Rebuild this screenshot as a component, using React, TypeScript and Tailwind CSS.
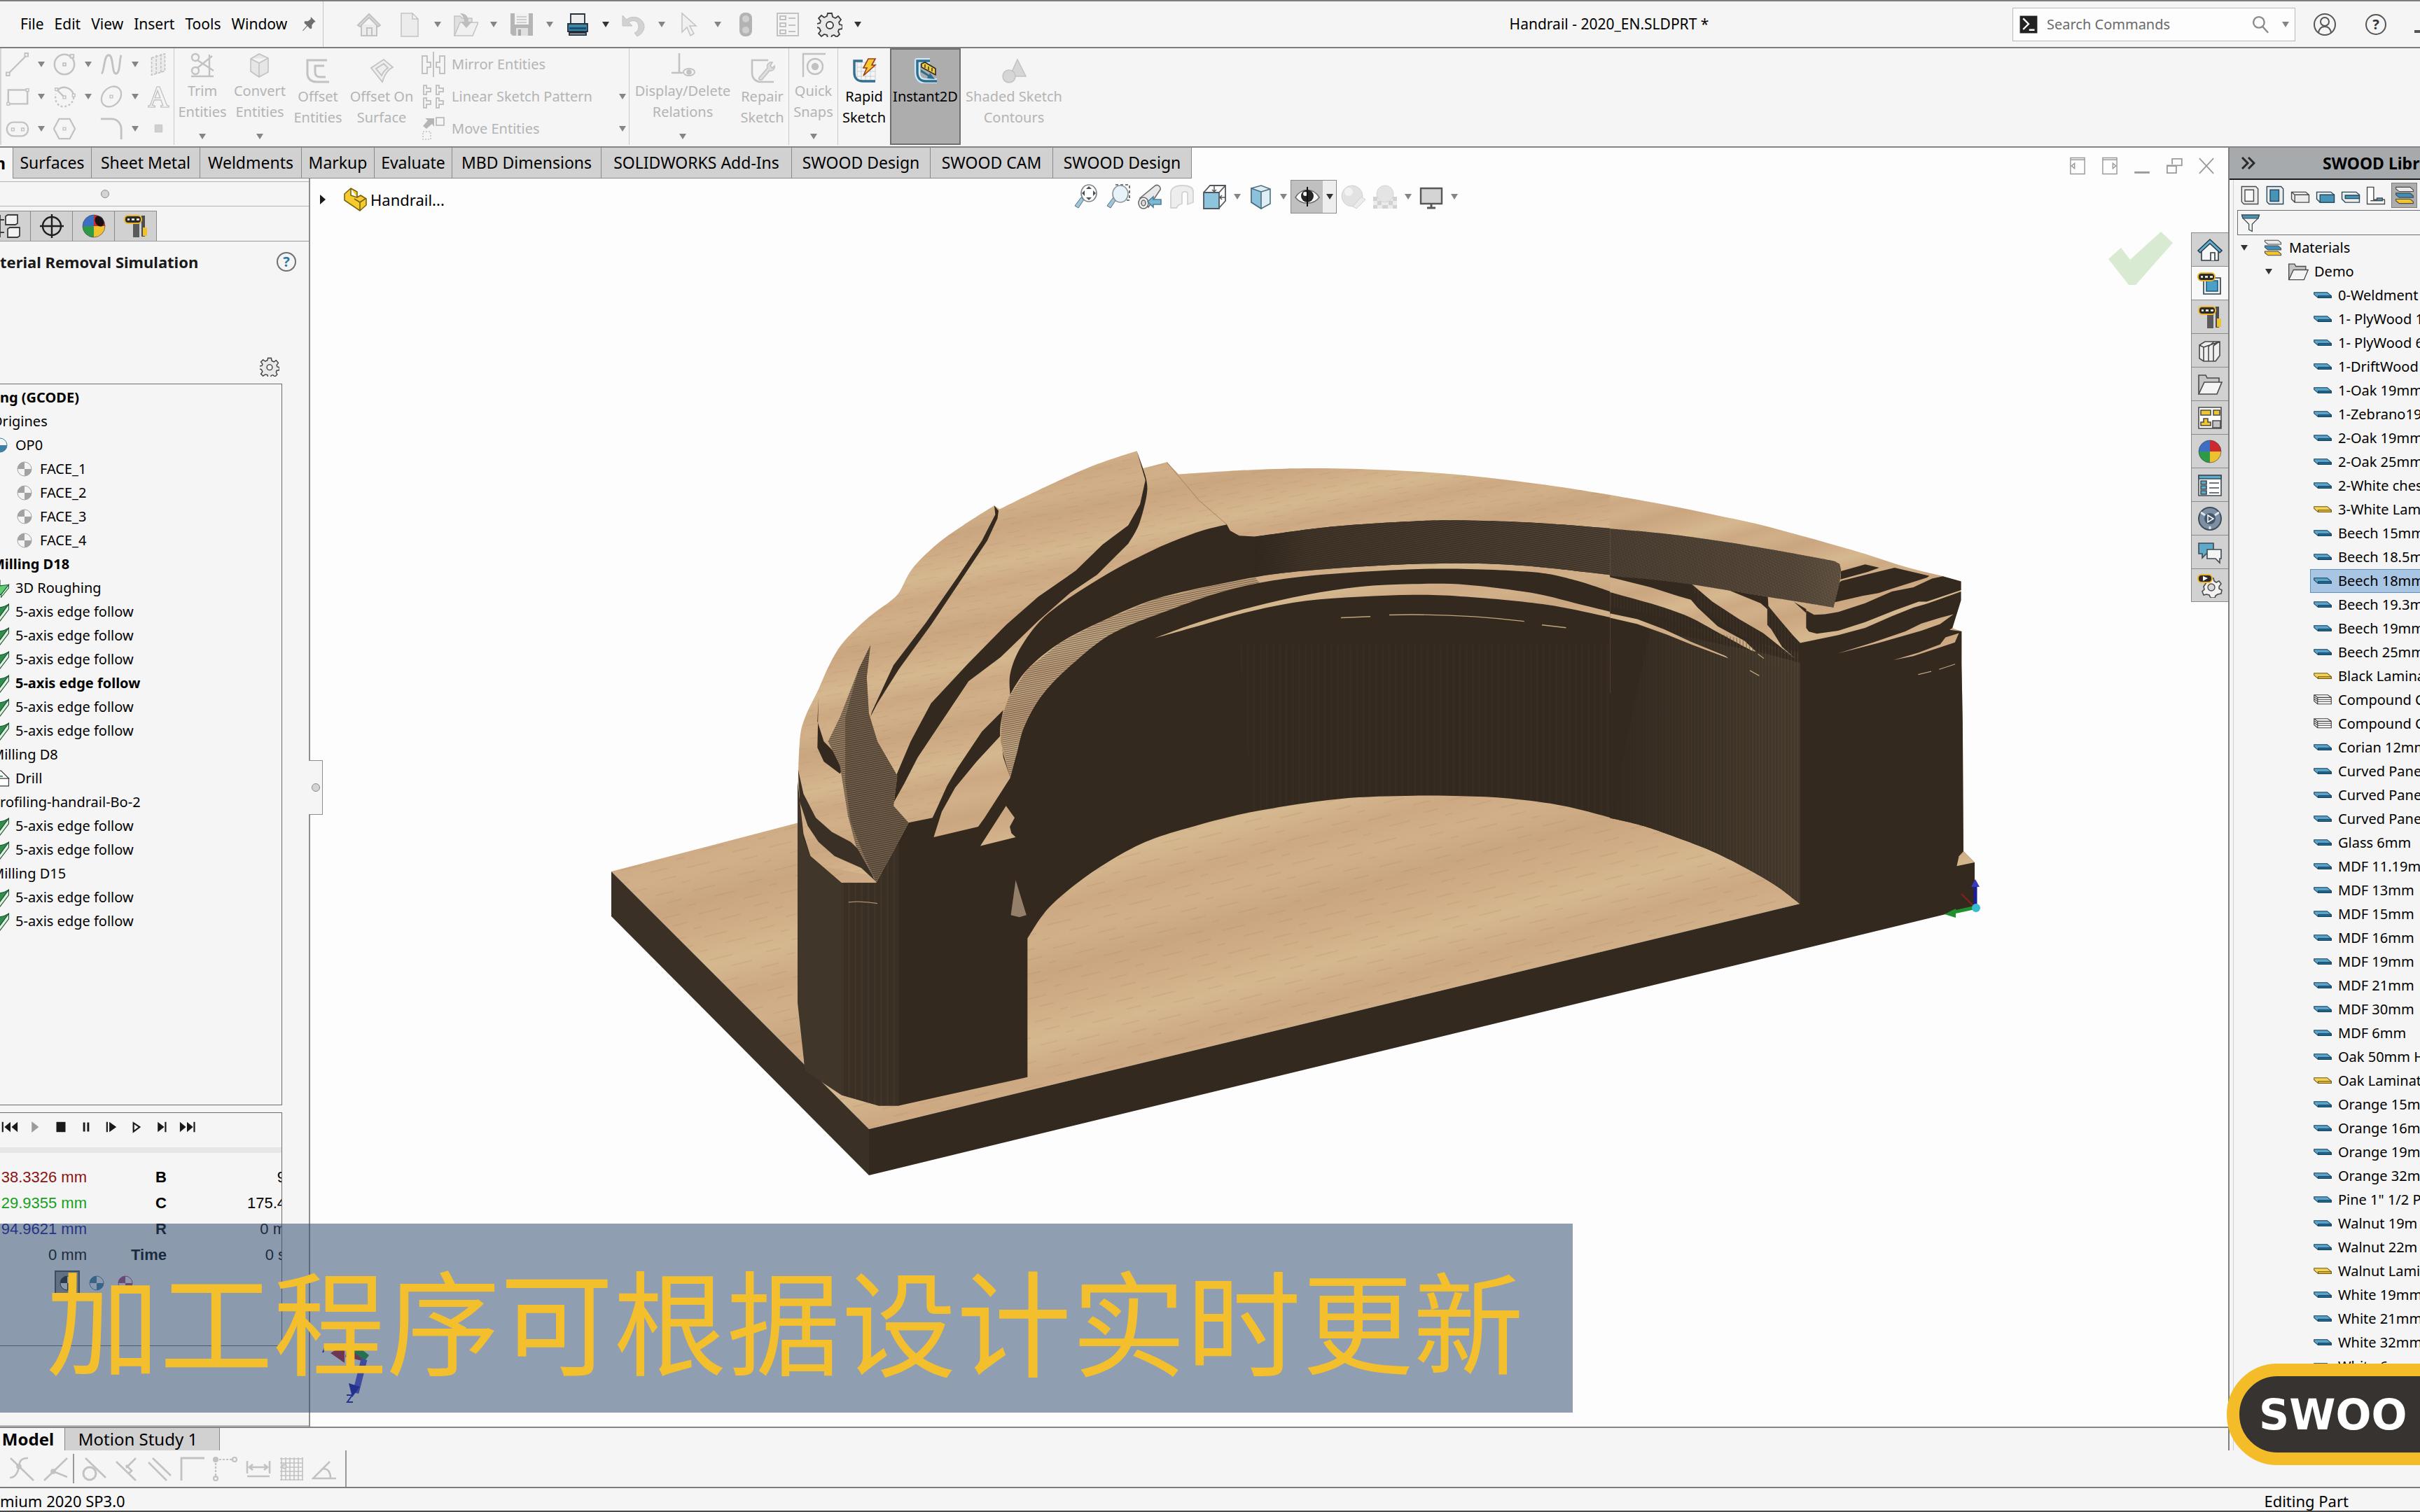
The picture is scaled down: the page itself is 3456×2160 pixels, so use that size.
import type { ReactNode } from 'react'
import { clsx } from 'clsx'

const G = '#c2c2c2'
const D = '#3c3c3c'

// All icons are drawn on a 36 x 36 grid
const art: Record<string, ReactNode> = {
  pin: <path d="M19 4l9 9-3 1-4 5 0 6-3 1-5-5-8 9-1-1 8-9-5-5 1-3h6l5-4z" fill="#6f6f6f" />,
  home: <g fill="#ececec" stroke={G} strokeWidth="2"><path d="M7 18v16h22V18" /><path d="M2 19L18 3l16 16-3 2L18 8 5 21z" fill="#dcdcdc" /><path d="M15 34V23h7v11" fill="none" /></g>,
  doc: <path d="M6 2h16l8 8v25H6zM22 2v8h8" fill="#ececec" stroke={G} strokeWidth="1.5" />,
  open: <g stroke={G} strokeWidth="1.5"><path d="M2 34V6h8l3 3h14v10" fill="#e0e0e0" /><path d="M2 34l8-19h26l-8 19z" fill="#f0f0f0" /><path d="M10 2c9 0 12 5 12 12h5l-8 9-8-9h5c0-5-2-8-6-12z" fill="#bdbdbd" stroke="none" /></g>,
  save: <g><path d="M2 2h32v32H5l-3-3z" fill="#b5b5b5" /><path d="M8 2h20v16H8z" fill="#f1f1f1" /><path d="M11 7h14M11 11h14M11 15h14" stroke={G} strokeWidth="1.5" /><path d="M10 23h17v11H10z" fill="#e0e0e0" /><path d="M13 25h4v9h-4z" fill="#a8a8a8" /></g>,
  print: <g stroke="#26303a" strokeWidth="1.8"><path d="M8 17V3h20v14" fill="#ececec" /><path d="M4 17h28v11H4z" fill="#3e86a8" /><path d="M6 22h24v3H6z" fill="#14506e" stroke="none" /><path d="M6 30h24v3H6z" fill="#cfe6f0" /></g>,
  undo: <path d="M2 5v15h14l-5-5c6-5 14-2 14 6 0 5-3 8-6 9l4 5c6-3 10-8 10-14C33 9 17 3 8 11z" fill="#d2d2d2" stroke={G} />,
  cursor: <path d="M7 2v27l7-7 5 12 5-3-6-11h9z" fill="#f0f0f0" stroke={G} strokeWidth="1.5" />,
  light: <g><rect x="9" y="1" width="18" height="34" rx="8" fill="#b3b3b3" /><circle cx="18" cy="10" r="5" fill="#cfcfcf" /><circle cx="18" cy="26" r="5" fill="#cfcfcf" /></g>,
  list: <g stroke={G} strokeWidth="2" fill="none"><path d="M3 2h30v32H3z" /><path d="M7 6h8v5H7zM7 16h8v5H7zM7 26h8v5H7zM19 9h10M19 19h10M19 28h10" /></g>,
  gear: <g fill="#e9e9e9" stroke={D} strokeWidth="1.8"><path d="M15 2h6l1 5 4 2 4-3 4 5-3 4 1 3 4 1v5l-5 1-1 3 2 4-4 4-4-3-3 1-1 3h-5l-1-4-4-1-4 3-4-4 3-4-2-4-4-1v-5l5-1 1-3-3-4 4-4 4 3 4-2z" /><circle cx="18" cy="19" r="5" fill="#f8f8f8" /></g>,
  line: <g stroke={G} strokeWidth="2" fill="#f5f5f5"><path d="M4 32L32 4" strokeWidth="2.5" /><path d="M1 30h5v5H1zM29 1h5v5h-5z" /></g>,
  circle: <g stroke={G} strokeWidth="2" fill="#f5f5f5"><circle cx="18" cy="18" r="15" strokeWidth="2.6" /><path d="M16 16h4v4h-4zM27 3h5v5h-5z" /></g>,
  spline: <path d="M3 32C8 30 6 4 14 4s4 28 11 28S30 8 33 4" stroke={G} strokeWidth="3" fill="none" />,
  plane: <path d="M8 8l20-6v26L8 34zM15 4v28M22 2v28" stroke={G} strokeWidth="1.8" strokeDasharray="4 2" fill="#ececec" />,
  rect: <g stroke={G} strokeWidth="2.6" fill="none"><path d="M4 8h29v21H4z" /><path d="M2 27h4v4H2zM31 6h4v4h-4z" strokeWidth="1.5" fill="#f5f5f5" /></g>,
  arc: <g stroke={G} strokeWidth="2.4" fill="none"><path d="M8 8c8-8 22-3 24 8" /><path d="M32 19c-1 10-10 15-18 14C6 31 3 22 5 14" strokeDasharray="3 3" /><path d="M6 7l12 12" /><path d="M4 5h4v4H4zM30 14h4v4h-4zM16 17h4v4h-4z" strokeWidth="1.5" fill="#f5f5f5" /></g>,
  ellipse: <g stroke={G} fill="none"><ellipse cx="18" cy="18" rx="17" ry="13" transform="rotate(-48 18 18)" strokeWidth="2.4" /><path d="M16 16h4v4h-4z" strokeWidth="1.5" /></g>,
  text: <path d="M3 34v-2l3-1L16 3h4l11 28 3 1v2H22v-2l3-1-3-8H12l-3 8 4 1v2zM13 20h8l-4-11z" stroke={G} strokeWidth="1.5" fill="none" />,
  slot: <g stroke={G} strokeWidth="2.4" fill="none"><rect x="2" y="8" width="32" height="21" rx="10" /><path d="M9 17h4v4H9zM24 17h4v4h-4z" strokeWidth="1.5" /></g>,
  polygon: <g stroke={G} strokeWidth="2.4" fill="none"><path d="M10 3h16l8 15-8 15H10L2 18z" /><path d="M16 16h4v4h-4z" strokeWidth="1.5" /></g>,
  fillet: <path d="M2 3h16c10 0 15 8 15 16v15" stroke={G} strokeWidth="3" fill="none" />,
  point: <path d="M13 12h11v11H13z" fill="#cfcfcf" stroke={G} />,
  trim: <g stroke={G} strokeWidth="2.4" fill="none"><circle cx="8" cy="7" r="5" /><circle cx="8" cy="26" r="5" /><path d="M11 11l23 15M11 22L32 5M28 3v31M2 34h32" /></g>,
  convert: <path d="M5 9l12-7 13 6v20l-13 7-12-8zM5 9l12 6 13-7M17 15v20" stroke={G} strokeWidth="1.6" fill="#e6e6e6" />,
  offset: <path d="M31 3H3v19c0 8 6 12 13 12h18M27 11H14v9c0 5 3 7 7 7h8" stroke={G} strokeWidth="3" fill="none" />,
  offsetOn: <path d="M3 14L21 2l13 11c-8 4-12 10-15 21zM10 15l11-7 6 6c-5 3-7 6-9 11z" stroke={G} strokeWidth="1.8" fill="#eee" />,
  mirror: <path d="M2 6h7v9h5v7H9v9H2zM34 6h-7v9h-5v7h5v9h7zM18 0v36" stroke={G} strokeWidth="2" fill="none" />,
  pattern: <path d="M4 2h4v4h6v5H8v4H4zM22 2h4v4h6v5h-6v4h-4zM4 20h4v4h6v5H8v5H4zM22 20h4v4h6v5h-6v5h-4z" stroke={G} strokeWidth="2" fill="none" />,
  move: <g><path d="M3 14l7-8-4-3h13v12l-3-4-8 7z" fill="#b5b5b5" /><path d="M22 2h11v11H22z" stroke={G} strokeWidth="2" fill="none" /><path d="M3 22h11v11H3z" stroke={G} strokeDasharray="2 2" strokeWidth="1.5" fill="none" /></g>,
  relations: <g stroke={G} strokeWidth="2.6" fill="none"><path d="M13 1v28M2 29h16" /><ellipse cx="27" cy="28" rx="8" ry="5" strokeWidth="2" /><circle cx="27" cy="28" r="2.5" fill={G} /></g>,
  repair: <g stroke={G} fill="none"><path d="M26 3H3v18c0 8 5 13 13 13h18" strokeWidth="2.6" /><path d="M13 28l12-14c-2-5 3-9 7-8l-3 5 3 3 3-3c1 5-3 8-7 7L17 31c-3 1-5-1-4-3z" strokeWidth="1.6" fill="#dedede" /></g>,
  snaps: <g stroke={G} strokeWidth="2.4" fill="none"><path d="M3 35V2h32" /><circle cx="20" cy="20" r="11" /><circle cx="20" cy="20" r="4" fill={G} /></g>,
  rapid: <g fill="none"><path d="M8 6h26v26H8zM14 6v26M20 6v26M27 6v26M8 13h26M8 19h26M8 26h26" stroke="#c9cdd1" strokeWidth="1" /><path d="M16 4H4v17c0 8 5 12 12 12h18" stroke="#36708f" strokeWidth="3.4" /><path d="M24 1h10l-5 9h5L17 25l5-11h-5z" fill="#f6c933" stroke="#9a3a16" strokeWidth="1.6" /></g>,
  instant: <g fill="none"><path d="M24 4H6v16c0 9 5 13 12 13h16" stroke="#cfe9f6" strokeWidth="8" strokeLinejoin="round" /><path d="M24 4H6v16c0 9 5 13 12 13h16" stroke="#2f6d8e" strokeWidth="3.4" /><path d="M12 8l5-2 15 9v9L12 13z" fill="#f5cd3c" stroke="#2c2c2c" strokeWidth="1.6" /><path d="M17 9v5M22 12v5M27 14v5" stroke="#2c2c2c" strokeWidth="1.4" /><path d="M11 16l12 8 1-3 7 9-11-1 1-3-10-6z" fill="#2f6d8e" /></g>,
  shaded: <g fill="#d6d6d6" stroke={G} strokeWidth="1.5"><path d="M23 2l12 24H12z" /><circle cx="11" cy="26" r="9" /></g>,
  part: <path d="M3 10l9-8 9 5v8l5-3 8 5v9l-9 8L3 19z M12 2v10l9 3M25 34V22l9-6M25 22l-8-5" fill="#f6cb2e" stroke="#7a6414" strokeWidth="1.6" strokeLinejoin="round" />,
  zoomFit: <g><path d="M3 31l9-12 4 3-8 12z" fill="#9cc7dc" stroke="#5b6b74" /><ellipse cx="23" cy="13" rx="11" ry="12" fill="#fff" stroke="#7b8288" strokeWidth="1.6" /><path d="M23 3l4 4h-8zM23 23l4-4h-8zM13 13l4-4v8zM33 13l-4-4v8z" fill="#4a4f53" /></g>,
  zoomArea: <g><path d="M3 31l9-12 4 3-8 12z" fill="#9cc7dc" stroke="#5b6b74" /><path d="M15 1h20v22H22" fill="none" stroke="#4a4f53" strokeWidth="1.6" strokeDasharray="4 3" /><ellipse cx="22" cy="14" rx="11" ry="12" fill="#e6f3fa" stroke="#8c9499" strokeWidth="1.6" /></g>,
  prevView: <g stroke="#6a6a6a" strokeWidth="1.6"><path d="M4 20L26 2c4-2 8 2 7 6L16 33z" fill="#e8e8e8" /><ellipse cx="9" cy="27" rx="7" ry="8" fill="#f4f4f4" /><ellipse cx="9" cy="27" rx="3" ry="4" fill="#ddd" /><path d="M15 25l8-7v4h11v7H23v4z" fill="#7db9d6" stroke="#4c7f98" /></g>,
  section: <path d="M2 34V13C2 5 10 2 18 2s16 2 16 9v15l-8 3V13c0-3-8-3-8 1v14l-5 2-3 4z" fill="#ededed" stroke="#d2d2d2" strokeWidth="1.8" />,
  orient: <g stroke="#50585d" strokeWidth="1.8" fill="none"><path d="M3 12l9-10h22v22l-9 10M25 12l9-10" /><path d="M3 12h22v23H3z" fill="#8fc4de" /><path d="M18 2v9M15 8l3 3 3-3M34 19h-8M29 16l-3 3 3 3" strokeWidth="1.5" /></g>,
  display: <g stroke="#4f6e7e" strokeWidth="1.6"><path d="M5 6l14-4 13 5v21l-13 7-14-9z" fill="#dfeef6" /><path d="M5 6l14 5v24L5 26z" fill="#8cc1db" /><path d="M19 11l13-4" /></g>,
  eye: <g><path d="M1 19C9 5 27 5 35 19 27 30 9 30 1 19z" fill="#fafafa" stroke="#6d6d6d" strokeWidth="1.6" /><circle cx="18" cy="17" r="9" fill="#262626" /><circle cx="15" cy="14" r="3" fill="#f2f2f2" /><path d="M18 4v28" stroke="#111" strokeWidth="2" /></g>,
  appearance: <g><circle cx="17" cy="17" r="15" fill="#e2e2e2" stroke="#d4d4d4" /><circle cx="12" cy="11" r="6" fill="#f2f2f2" /><path d="M18 32l12-14 6 4-13 13z" fill="#ececec" stroke="#cfcfcf" /></g>,
  scene: <g><path d="M1 18h34v17H1z" fill="#ececec" /><path d="M1 18h6v6H1zM7 24h6v6H7zM1 30h6v5H1zM29 18h6v6h-6zM23 24h6v6h-6zM29 30h6v5h-6zM14 30h8v5h-8z" fill="#d2d2d2" /><circle cx="18" cy="14" r="12" fill="#e4e4e4" stroke="#d6d6d6" /></g>,
  monitor: <g><path d="M3 6h30v22H3z" fill="#d4d4d4" stroke="#585858" strokeWidth="2.4" /><path d="M18 28v5M12 34h12" stroke="#585858" strokeWidth="3" /></g>,
  tree: <g stroke={D} strokeWidth="1.8" fill="#f2f2f2"><path d="M4 2v32M10 9H4M10 27H4" fill="none" /><path d="M12 4l3-2h14v12l-3 2H12zM15 22l3-2h14v12l-3 2H15z" /></g>,
  target: <g stroke="#1e1e1e" strokeWidth="2.4" fill="none"><circle cx="18" cy="18" r="13" /><path d="M18 1v34M1 18h34" /></g>,
  ball: <g><path d="M18 18V2A16 16 0 0 0 2 18z" fill="#3c6fc4" /><path d="M18 18V2A16 16 0 0 1 34 18z" fill="#cc2a2e" /><path d="M18 18H2A16 16 0 0 0 18 34z" fill="#2f9a45" /><path d="M18 18H34A16 16 0 0 1 18 34z" fill="#edc22e" /><circle cx="18" cy="18" r="16" fill="none" stroke="#3c3c3c" strokeOpacity=".6" /></g>,
  colors: <g><path d="M18 18V2A16 16 0 0 0 2 18z" fill="#3c6fc4" /><path d="M18 18V2A16 16 0 0 1 34 18z" fill="#cc2a2e" /><path d="M18 18H2A16 16 0 0 0 18 34z" fill="#2f9a45" /><path d="M18 18H34A16 16 0 0 1 18 34z" fill="#edc22e" /><ellipse cx="26" cy="11" rx="6" ry="8" transform="rotate(-30 26 11)" fill="#1d1012" /><circle cx="18" cy="18" r="16" fill="none" stroke="#3c3c3c" strokeOpacity=".6" /></g>,
  cam: <g><path d="M14 14h9v20h-9z" fill="#5a5a5a" /><path d="M26 3h5v30h-5z" fill="#4d4d4d" /><path d="M28 20h6v12h-6z" fill="#edc22e" /><rect x="2" y="3" width="24" height="11" rx="5" fill="#2c2a26" stroke="#edb52a" strokeWidth="2" /><path d="M6 8.500h3M12 8.500h4M19 8.500h4" stroke="#fff" strokeWidth="2.500" /></g>,
  cad: <g><path d="M9 10h24v23H9z" fill="#f2f2f2" stroke="#2c3c46" strokeWidth="1.6" /><path d="M13 14h16v15H13z" fill="#4aa0c8" stroke="#1d5c7c" strokeWidth="1.6" /><rect x="1" y="3" width="24" height="11" rx="5" fill="#2c2a26" stroke="#edb52a" strokeWidth="2" /><path d="M5 8.500h3M11 8.500h4M18 8.500h4" stroke="#fff" strokeWidth="2.500" /></g>,
  house: <g stroke="#2b3a44" strokeWidth="1.6"><path d="M6 18v15h24V18L18 8z" fill="#f7f7f7" /><path d="M1 19L18 3l17 16-3 3L18 9 4 22z" fill="#5fb0d6" /><path d="M19 33V22h6v11" fill="#fff" /></g>,
  books: <path d="M3 10l8-5h21v20l-6 8H9l-6-4zM3 10l6 3v20M9 13l23-8M16 33V12l8-7M23 33V11l8-6" fill="#efefef" stroke="#4a4a4a" strokeWidth="1.6" />,
  folder: <g stroke="#4a4a4a" strokeWidth="1.6"><path d="M2 32V5h10l2 4h17v6" fill="#c4c4c4" /><path d="M2 32l8-17h25l-7 17z" fill="#f4f4f4" /></g>,
  palette: <g stroke="#4a4a4a" strokeWidth="1.6"><path d="M2 3h32v30H2z" fill="#fff" /><path d="M5 7h14v7H5zM23 7h9v7h-9zM9 19h6v5h4v5H5v-5h4z" fill="#f0c52e" /><path d="M22 22h11v10H22z" fill="#c4c4c4" /></g>,
  props: <g stroke="#3c4a52" strokeWidth="1.6"><path d="M2 4h32v29H2z" fill="#fff" /><path d="M2 4h32v5H2z" fill="#5fa9cb" /><path d="M5 12h8v5H5zM5 19h8v5H5zM5 26h8v5H5z" fill="#5fa9cb" /><path d="M17 15h14M17 22h14M17 29h14" /></g>,
  disc: <g><circle cx="18" cy="18" r="16" fill="#7d8fa3" stroke="#3f4d5b" strokeWidth="2" /><circle cx="18" cy="18" r="8" fill="#44566a" /><path d="M15 13l8 5-8 5z" fill="none" stroke="#fff" strokeWidth="1.500" /><path d="M5 9l6 4M31 9l-6 4M18 29v4" stroke="#dfe7ee" strokeWidth="3" /></g>,
  chat: <g stroke="#3c4a52" strokeWidth="1.600"><path d="M2 5h21v15H13l-6 6v-6H2z" fill="#5fa9cb" /><path d="M14 14h20v13h-2v6l-6-6H14z" fill="#f4f4f4" /></g>,
  simulate: <g><path d="M17 8h6l1 4 3 2 4-2 3 4-3 4v3l4 2-1 5-5 1-3 2-1 3h-6l-2-4-4-1-4 1-2-5 3-3-1-4z" fill="#f2f2f2" stroke="#4a4a4a" strokeWidth="1.6" /><circle cx="20" cy="21" r="5" fill="#d8d8d8" stroke="#4a4a4a" strokeWidth="1.4" /><rect x="1" y="3" width="20" height="11" rx="5" fill="#2c2a26" stroke="#edb52a" strokeWidth="2" /><path d="M8 5l7 3-7 4z" fill="#fff" /></g>,
  frame: <g stroke="#4a4a4a" strokeWidth="1.8" fill="#ececec"><path d="M3 2h26l4 4v28H7l-4-4z" /><path d="M9 8h16v21H9z" fill="#f8f8f8" /></g>,
  frameBlue: <g stroke="#27485a" strokeWidth="1.8" fill="#ececec"><path d="M3 2h26l4 4v28H7l-4-4z" /><path d="M9 8h16v21H9z" fill="#4694b8" /></g>,
  box: <path d="M2 12h26l6 5v14H8l-6-6zM2 12l6 5h26M8 17v14" fill="#ececec" stroke="#4a4a4a" strokeWidth="1.8" />,
  boxBlue: <g stroke="#27485a" strokeWidth="1.8"><path d="M2 12h26l6 5v14H8l-6-6z" fill="#ececec" /><path d="M8 17h26v14H8z" fill="#4694b8" /></g>,
  boxHalf: <g stroke="#27485a" strokeWidth="1.8"><path d="M2 12h26l6 5v14H8l-6-6z" fill="#ececec" /><path d="M8 18h26v6H8z" fill="#4694b8" /></g>,
  angle: <g stroke="#4a4a4a" strokeWidth="1.8" fill="#fff"><path d="M2 3h12v23h20v8H2z" /><path d="M8 28h12v-5h10v5z" fill="#4694b8" /></g>,
  layers: <g stroke="#4a4a4a" strokeWidth="1.4"><path d="M2 3h26l6 5v3H8L2 6z" fill="#e9e9e9" /><path d="M2 14h26l6 5v3H8l-6-5z" fill="#3d8fb8" /><path d="M2 25h26l6 5v3H8l-6-5z" fill="#f0c52e" /></g>,
  funnel: <g stroke="#3c4a52" strokeWidth="1.6"><path d="M2 4h32l-2 6-11 11v13l-6-3V21L4 10z" fill="#f4f4f4" /><path d="M2 4h32l-2 6H4z" fill="#4694b8" /></g>,
  material: <g stroke="#123f5a" strokeWidth="1.4"><path d="M1 12h26l8 7v4H9l-8-7z" fill="#5ba3c9" /><path d="M9 19h26v4H9z" fill="#226a94" /></g>,
  laminate: <g stroke="#6b5410" strokeWidth="1.4"><path d="M1 12h26l8 7v4H9l-8-7z" fill="#f2d25a" /><path d="M9 19h26v4H9z" fill="#e6b93a" /></g>,
  compound: <path d="M1 8h27l7 5v13H8l-7-6zM1 8l7 5h27M8 13v13M8 17h27M8 21h27M1 12l7 5M1 16l7 5" fill="#fff" stroke="#3c3c3c" strokeWidth="1.5" />,
  rough: <g stroke="#1d5c34" strokeWidth="1.4"><path d="M2 10l16-6v10l16-2-14 18H4z" fill="#5fcf72" /><path d="M20 30l14-18v6L20 35z" fill="#d7f0dc" /></g>,
  edge: <g stroke="#1b5330" strokeWidth="1.400"><path d="M1 10c14 2 24 0 33-6L18 26H4z" fill="#2f8f4a" /><path d="M18 26L34 4v10L18 35H4v-9z" fill="#dff0e2" /></g>,
  drill: <g stroke="#3c3c3c" strokeWidth="1.6" fill="#fff"><path d="M2 18h32v14H2z" /><path d="M2 18l6-14h12l14 14z" /><path d="M10 9h5M17 14h6" stroke="#2f8f4a" strokeWidth="2.5" /></g>,
  relA: <g stroke={G} strokeWidth="2.6" fill="none"><path d="M1 3l33 32M26 3c-10 0-12 4-13 12S8 31 0 31" /><circle cx="13" cy="15" r="2.500" /></g>,
  relB: <g stroke={G} strokeWidth="2.6" fill="none"><path d="M34 3L1 35M14 22l20 8" /><circle cx="14" cy="22" r="2.500" /></g>,
  relC: <g stroke={G} strokeWidth="2.6" fill="none"><path d="M6 3l29 28" /><circle cx="12" cy="25" r="9" strokeWidth="3" /></g>,
  relD: <path d="M3 8l28 27M31 3L17 17M17 13l8 8-5 5" stroke={G} strokeWidth="2.6" fill="none" />,
  relE: <path d="M2 9l26 26M8 3l26 25" stroke={G} strokeWidth="2.6" fill="none" />,
  relF: <path d="M2 35V3h33" stroke={G} strokeWidth="2.8" fill="none" />,
  relG: <g stroke={G} strokeWidth="2.2" fill="none"><path d="M4 5h24M4 5v26" strokeDasharray="3 2" /><circle cx="4" cy="5" r="3" fill={G} /><circle cx="31" cy="5" r="3" /><circle cx="4" cy="32" r="3" /></g>,
  relH: <g stroke={G} strokeWidth="2.6" fill="none"><path d="M2 7v18M34 7v18M5 16h26M2 29h32M10 12l-5 4 5 4M26 12l5 4-5 4" /></g>,
  relI: <g stroke={G} strokeWidth="1.6" fill="none"><path d="M2 4h33M2 10h33M2 16h33M2 22h33M2 28h33M2 34h33M4 2v33M10 2v33M16 2v33M22 2v33M28 2v33M34 2v33" /><circle cx="8" cy="15" r="3" fill="#ddd" /></g>,
  relJ: <path d="M35 32H2L26 8M14 19c8-3 13 3 13 13" stroke={G} strokeWidth="2.600" fill="none" />,
  rewind: <path d="M1 8h3v20H1zM18 8v20L6 18zM32 8v20L20 18z" fill="#1a1a1a" />,
  play: <path d="M10 7v22l14-11z" fill="#9b9b9b" />,
  stop: <path d="M9 8h18v20H9z" fill="#1a1a1a" />,
  pause: <path d="M12 9h4v18h-4zM20 9h4v18h-4z" fill="#1a1a1a" />,
  stepPlay: <path d="M8 8h3v20H8zM14 8v20l14-10z" fill="#1a1a1a" />,
  playOutline: <path d="M12 10v17l12-9z" fill="none" stroke="#1a1a1a" strokeWidth="3" />,
  stepEnd: <path d="M10 8v20l13-10zM24 8h3v20h-3z" fill="#1a1a1a" />,
  forward: <path d="M4 8v20l12-10zM18 8v20l12-10zM31 8h3v20h-3z" fill="#1a1a1a" />,
  panePrev: <path d="M4 2h28v32H4zM4 2v4h28V2M12 13v10l-6-5z" fill="none" stroke="#9a9a9a" strokeWidth="2" />,
  paneNext: <path d="M4 2h28v32H4zM4 2v4h28V2M24 13v10l6-5z" fill="none" stroke="#9a9a9a" strokeWidth="2" />,
  minimize: <path d="M3 29h30v4H3z" fill="#9a9a9a" />,
  restore: <path d="M14 15V4h19v13H22M4 17h18v15H4zM14 4h19M4 18h18" fill="none" stroke="#9a9a9a" strokeWidth="2.500" />,
  close: <path d="M4 3l28 30M32 3L4 33" stroke="#9a9a9a" strokeWidth="2.5" />,
  search: <g fill="none" stroke="#8a8a8a" strokeWidth="3"><circle cx="14" cy="14" r="10" /><path d="M21 22l10 11" /></g>,
  user: <g fill="none" stroke="#555" strokeWidth="2"><circle cx="18" cy="18" r="15" /><circle cx="18" cy="14" r="6" /><path d="M9 30c1-7 5-9 9-9s8 2 9 9" /></g>,
  prompt: <g><path d="M2 2h32v32H2z" fill="#222" /><path d="M8 7l10 10L8 27M19 28h10" stroke="#fff" strokeWidth="3" fill="none" /></g>,
}

const Icon = ({ name, size = 'size-9' }: { name: string; size?: string }) => (
  <svg viewBox="0 0 36 36" className={clsx('shrink-0', size)} aria-hidden="true">{art[name]}</svg>
)

const Caret = ({ dark = false }: { dark?: boolean }) => (
  <svg viewBox="0 0 10 8" className="h-2 w-[10px] shrink-0" aria-hidden="true">
    <path d="M0 0h10L5 8z" fill={dark ? '#333' : '#858585'} />
  </svg>
)

const Quarter = ({ color, size = 'size-[22px]' }: { color: string; size?: string }) => (
  <svg viewBox="0 0 22 22" className={clsx('shrink-0', size)} aria-hidden="true">
    <circle cx="11" cy="11" r="10" fill="#f4f4f4" stroke={color} />
    <path d="M11 11V1A10 10 0 0 0 1 11zM11 11V21A10 10 0 0 0 21 11z" fill={color} />
  </svg>
)

const quickAccess = [
  ['doc', false], ['open', false], ['save', false], ['print', true], ['undo', false], ['cursor', false],
] as const

const TitleBar = () => (
  <header className="flex h-[69px] shrink-0 items-center border-t-2 border-b-2 border-[#7d7d7d] bg-[#f5f5f5]">
    <nav className="flex h-full w-[462px] items-center gap-[15px] border-r border-[#c4c4c4] pl-[29px] text-[21px]">
      {['File', 'Edit', 'View', 'Insert', 'Tools', 'Window'].map((m) => <button key={m}>{m}</button>)}
      <button className="ml-1" aria-label="Pin"><Icon name="pin" size="size-7" /></button>
    </nav>
    <div className="ml-[42px] flex items-center">
      <button aria-label="Home" className="mr-3 flex w-[46px] justify-center"><Icon name="home" /></button>
      {quickAccess.map(([name, dark]) => (
        <div key={name} className="flex items-center">
          <button aria-label={name} className="flex w-[46px] justify-center"><Icon name={name} /></button>
          <button aria-label={`${name} menu`} className="flex w-[34px] justify-center"><Caret dark={dark} /></button>
        </div>
      ))}
      <div className="flex items-center gap-[14px]">
        {['light', 'list', 'gear'].map((n) => (
          <button key={n} aria-label={n} className="flex w-[46px] justify-center"><Icon name={n} /></button>
        ))}
      </div>
      <button aria-label="Options menu" className="flex w-[34px] justify-center"><Caret dark /></button>
    </div>
    <div className="flex-1 text-center text-[21px]"><span className="ml-[480px]">Handrail - 2020_EN.SLDPRT *</span></div>
    <div className="mr-[24px] flex h-12 w-[404px] items-center gap-3 border border-[#b9b9b9] bg-[#fdfdfd] pr-1 pl-2">
      <Icon name="prompt" size="size-7" />
      <input aria-label="Search Commands" placeholder="Search Commands" className="min-w-0 flex-1 bg-transparent text-[20px] outline-none placeholder:text-[#6a6a6a]" />
      <button aria-label="Search"><Icon name="search" size="size-7" /></button>
      <button aria-label="Search options" className="px-1"><Caret /></button>
    </div>
    <div className="flex items-center gap-10">
      <button aria-label="Account"><Icon name="user" size="size-9" /></button>
      <button aria-label="Help" className="flex size-[30px] items-center justify-center rounded-full border-2 border-[#555] text-[20px] font-bold text-[#333]">?</button>
      <button aria-label="Minimize" className="w-2 border-b-4 border-[#555] pt-5" />
    </div>
  </header>
)

const sketchTools = [
  [['line', true], ['circle', true], ['spline', true], ['plane', false]],
  [['rect', true], ['arc', true], ['ellipse', true], ['text', false]],
  [['slot', true], ['polygon', false], ['fillet', true], ['point', false]],
] as const

type BigProps = { icon: string; top: string; bottom?: string; width: string; menu?: boolean; tone?: string }

const BigButton = ({ icon, top, bottom, width, menu = false, tone = 'text-[#b4b4b4]' }: BigProps) => (
  <button className={clsx('flex h-[138px] shrink-0 flex-col items-center text-[20px] leading-[30px] whitespace-nowrap', width, tone, menu ? 'pt-[2px]' : 'pt-[10px]')}>
    <span className="flex h-[44px] items-center"><Icon name={icon} /></span>
    <span>{top}</span>
    <span>{bottom}</span>
    {menu && <span className="pt-4"><Caret /></span>}
  </button>
)

const Rule = () => <span className="h-[138px] w-px shrink-0 bg-[#c9c9c9]" />

const Ribbon = () => (
  <section className="flex h-[142px] shrink-0 items-start border-b-2 border-[#858585] bg-[#f5f5f5]">
    <div className="flex w-[248px] shrink-0 flex-col border-l-2 border-[#d5d5d5] pl-[2px]">
      {sketchTools.map((row, i) => (
        <div key={i} className="flex h-[46px] items-center">
          {row.map(([name, menu]) => (
            <div key={name} className="flex items-center">
              <button aria-label={name} className="flex w-[42px] justify-center"><Icon name={name} size="size-[34px]" /></button>
              <span className="flex w-[25px] justify-center">{menu && <Caret />}</span>
            </div>
          ))}
        </div>
      ))}
    </div>
    <Rule />
    <BigButton icon="trim" top="Trim" bottom="Entities" width="w-[80px]" menu />
    <BigButton icon="convert" top="Convert" bottom="Entities" width="w-[84px]" menu />
    <BigButton icon="offset" top="Offset" bottom="Entities" width="w-[82px]" />
    <BigButton icon="offsetOn" top="Offset On" bottom="Surface" width="w-[100px]" />
    <div className="flex w-[303px] shrink-0 flex-col pr-1 pl-[6px] text-[20px] text-[#b4b4b4]">
      {[['mirror', 'Mirror Entities'], ['pattern', 'Linear Sketch Pattern'], ['move', 'Move Entities']].map(([icon, label], i) => (
        <button key={icon} className="flex h-[46px] items-center gap-2 whitespace-nowrap">
          <Icon name={icon} />
          <span className="flex-1 text-left">{label}</span>
          {i > 0 && <Caret />}
        </button>
      ))}
    </div>
    <Rule />
    <BigButton icon="relations" top="Display/Delete" bottom="Relations" width="w-[152px]" menu />
    <BigButton icon="repair" top="Repair" bottom="Sketch" width="w-[75px]" />
    <Rule />
    <BigButton icon="snaps" top="Quick" bottom="Snaps" width="w-[69px]" menu />
    <Rule />
    <BigButton icon="rapid" top="Rapid" bottom="Sketch" width="w-[74px]" tone="text-black" />
    <BigButton icon="instant" top="Instant2D" width="w-[101px]" tone="text-black bg-[#adadad] outline-2 -outline-offset-2 outline-[#6f6f6f]" />
    <BigButton icon="shaded" top="Shaded Sketch" bottom="Contours" width="w-[152px]" />
  </section>
)

const tabs = [
  ['Surfaces', 'w-[112px]'], ['Sheet Metal', 'w-[155px]'], ['Weldments', 'w-[145px]'], ['Markup', 'w-[104px]'],
  ['Evaluate', 'w-[111px]'], ['MBD Dimensions', 'w-[213px]'], ['SOLIDWORKS Add-Ins', 'w-[272px]'],
  ['SWOOD Design', 'w-[198px]'], ['SWOOD CAM', 'w-[175px]'], ['SWOOD Design', 'w-[198px]'],
]

const CommandTabs = () => (
  <div className="flex h-[44px] shrink-0 items-stretch bg-[#fdfdfd] text-[23px]">
    <button className="flex w-[19px] items-center justify-end border-r border-[#8a8a8a] bg-[#f5f5f5] pr-[10px] font-bold">n</button>
    {tabs.map(([label, width], i) => (
      <button key={i} className={clsx('border-r border-b border-[#8a8a8a] bg-[#d1d1d1] whitespace-nowrap', width)}>{label}</button>
    ))}
    <div className="flex flex-1 items-center justify-end gap-5 pt-2 pr-[18px]">
      {['panePrev', 'paneNext', 'minimize', 'restore', 'close'].map((n) => (
        <button key={n} aria-label={n}><Icon name={n} size="size-[26px]" /></button>
      ))}
    </div>
  </div>
)

const operations: { label: string; icon?: string; bold?: boolean; kind: 'root' | 'group' | 'op' | 'face' }[] = [
  { label: 'ng (GCODE)', bold: true, kind: 'root' },
  { label: 'Origines', kind: 'group' },
  { label: 'OP0', icon: 'origin', kind: 'op' },
  { label: 'FACE_1', kind: 'face' },
  { label: 'FACE_2', kind: 'face' },
  { label: 'FACE_3', kind: 'face' },
  { label: 'FACE_4', kind: 'face' },
  { label: 'Milling D18', bold: true, kind: 'group' },
  { label: '3D Roughing', icon: 'rough', kind: 'op' },
  { label: '5-axis edge follow', icon: 'edge', kind: 'op' },
  { label: '5-axis edge follow', icon: 'edge', kind: 'op' },
  { label: '5-axis edge follow', icon: 'edge', kind: 'op' },
  { label: '5-axis edge follow', icon: 'edge', bold: true, kind: 'op' },
  { label: '5-axis edge follow', icon: 'edge', kind: 'op' },
  { label: '5-axis edge follow', icon: 'edge', kind: 'op' },
  { label: 'Milling D8', kind: 'group' },
  { label: 'Drill', icon: 'drill', kind: 'op' },
  { label: 'Profiling-handrail-Bo-2', kind: 'group' },
  { label: '5-axis edge follow', icon: 'edge', kind: 'op' },
  { label: '5-axis edge follow', icon: 'edge', kind: 'op' },
  { label: 'Milling D15', kind: 'group' },
  { label: '5-axis edge follow', icon: 'edge', kind: 'op' },
  { label: '5-axis edge follow', icon: 'edge', kind: 'op' },
]

const axes = [
  ['38.3326 mm', 'text-[#8c1414]', 'B', '9'],
  ['29.9355 mm', 'text-[#17a01f]', 'C', '175.4'],
  ['94.9621 mm', 'text-[#1414a0]', 'R', '0 m'],
  ['0 mm', 'text-black', 'Time', '0 s'],
]

const SimulationPanel = () => (
  <aside className="flex w-[443px] shrink-0 flex-col overflow-hidden border-r-2 border-[#8d8d8d] bg-[#f5f5f5]">
    <div className="mt-1 flex h-9 shrink-0 items-center justify-center border-y border-[#b5b5b5] pr-[142px]">
      <span className="size-3 rounded-full border border-[#8a8a8a] bg-[#d4d4d4]" />
    </div>
    <div className="flex h-[50px] shrink-0 items-end border-b border-[#9a9a9a]">
      {['tree', 'target', 'colors', 'cam'].map((n, i) => (
        <button key={n} aria-label={n} className={clsx('flex h-[43px] items-center justify-center border-t border-r border-[#8a8a8a] bg-[#d1d1d1]', i === 0 ? 'w-11 pr-4' : 'w-[60px]')}>
          <Icon name={n} />
        </button>
      ))}
    </div>
    <div className="flex h-[58px] shrink-0 items-center justify-between pr-[18px]">
      <h2 className="text-[22px] font-bold text-[#1a1a1a]">terial Removal Simulation</h2>
      <button aria-label="Help" className="flex size-7 items-center justify-center rounded-full border-2 border-[#707070] text-[20px] font-bold text-[#2c79a5]">?</button>
    </div>
    <div className="flex h-[145px] shrink-0 items-end justify-end pr-[42px] pb-[10px]">
      <button aria-label="Simulation settings"><Icon name="gear" size="size-7" /></button>
    </div>
    <ul className="mr-[38px] min-h-0 flex-1 border border-l-0 border-[#6d6d6d] pt-[2px] text-[20px] whitespace-nowrap">
      {operations.map((o, i) => (
        <li key={i} className={clsx('flex h-[34px] items-center', o.bold && 'font-bold', o.kind === 'group' && '-ml-3', o.kind === 'op' && '-ml-[14px] gap-2', o.kind === 'face' && 'gap-[11px] pl-6')}>
          {o.kind === 'face' && <Quarter color="#a2a2a2" />}
          {o.icon === 'origin' && <Quarter color="#3f7fa5" size="size-7 p-[3px]" />}
          {o.icon && o.icon !== 'origin' && <Icon name={o.icon} size="size-7" />}
          {o.label}
        </li>
      ))}
    </ul>
    <div className="mt-[10px] mr-[38px] h-[334px] shrink-0 overflow-hidden border border-l-0 border-[#6d6d6d]">
      <div className="flex h-[57px] items-center border-b-[8px] border-[#e6e6e6] pr-4 pb-[10px] pl-[2px]">
        {['rewind', 'play', 'stop', 'pause', 'stepPlay', 'playOutline', 'stepEnd', 'forward'].map((n) => (
          <button key={n} aria-label={n} className="mr-[10px]"><Icon name={n} size="size-[26px]" /></button>
        ))}
      </div>
      <table className="mt-4 w-[408px] table-fixed font-['Liberation_Sans',sans-serif] text-[22px]">
        <tbody>
          {axes.map(([value, tone, name, other]) => (
            <tr key={name} className="h-[37px] text-right whitespace-nowrap">
              <td className={clsx('w-[124px]', tone)}>{value}</td>
              <th className="w-[114px] font-bold">{name}</th>
              <td>{other}</td>
            </tr>
          ))}
        </tbody>
      </table>
      <div className="flex items-center gap-[13px] pt-1 pl-[78px]">
        <button aria-label="Stock" className="flex size-9 items-center justify-center border-2 border-[#4a4a4a] bg-[#9c9c9c]"><Quarter color="#222" /></button>
        <button aria-label="Part" className="w-7"><Quarter color="#3f7fa5" /></button>
        <button aria-label="Tool"><Quarter color="#a8447c" /></button>
      </div>
    </div>
    <div className="h-[113px] shrink-0" />
    <div className="h-[2px] shrink-0 bg-[#b9b9b9]" />
  </aside>
)

// Smooth curve through "x y x y ..." points, as path commands that follow the first point
const curve = (points: string) => {
  const n = points.trim().split(/\s+/).map(Number)
  const p = n.reduce<[number, number][]>((all, v, i) => (i % 2 ? all : [...all, [v, n[i + 1]]]), [])
  let d = `${p[0][0]} ${p[0][1]}`
  for (let i = 0; i < p.length - 1; i++) {
    const a = p[Math.max(i - 1, 0)]
    const b = p[i]
    const c = p[i + 1]
    const e = p[Math.min(i + 2, p.length - 1)]
    d += `C${b[0] + (c[0] - a[0]) / 6} ${b[1] + (c[1] - a[1]) / 6} ${c[0] - (e[0] - b[0]) / 6} ${c[1] - (e[1] - b[1]) / 6} ${c[0]} ${c[1]}`
  }
  return d
}

const WOOD = 'url(#wood)'
const DARK = '#33291f'

const bodyLeft = `M51 1100L${curve('51 940 55 800 65 740 90 670 110 610 135 555 180 495 220 455')}L${curve('220 455 240 430 265 370 310 310 360 262 418 213')}L428 222L${curve('428 222 500 175 600 115 684 77')}L696 120 740 105 762 135L${curve('762 135 900 124 1020 120 1160 125 1300 138 1450 162 1570 187')}V600H600L300 1160z`
const floorLeft = curve('1570 990 1480 960 1380 942 1290 936 1200 935 1060 943 900 975 780 1015 700 1050 630 1100 575 1150 530 1200 505 1238 480 1290')
const ridge = curve('448 690 448 630 470 560 520 480 620 390 720 320 800 278 852 260')
const massLeft = `M852 260L858 275 875 288 905 290L${curve('905 290 1050 265 1200 252 1300 250 1430 256 1570 270')}L${floorLeft}V1635L240 1706 202 1706 135 1680 65 1620 51 1400V900L62 1030 75 1085 133 1152H198L258 1002 303 990 345 880 410 780 440 715L${ridge}z`
const bandTop = curve('905 290 1050 265 1200 252 1300 250 1430 256 1570 270')
const bandBottom = curve('1570 386 1400 362 1250 357 1100 365 960 380 902 390')
const rampOuter = curve('448 890 430 800 432 740 445 690 480 620 540 555 620 500 720 445 850 405 960 380 1100 365 1250 357 1400 362 1570 386')
const rampInner = curve('1570 428 1500 398 1420 378 1250 370 1100 378 960 395 850 425 740 475 640 530 570 600 510 680 475 760 460 830 448 890')
const nose = 'M187 560L165 620 130 740 108 800 130 860 145 985 160 1060 198 1150 225 1085 258 1002 230 960 237 885 200 800 184 730 180 640z'
const floorRight = curve('708 1427 620 1365 520 1310 380 1245 210 1185 100 1152 -2 1130')
const bandRight = `M${curve('-2 133 200 150 400 175 600 205 835 245')}L855 255 860 275 855 320 832 405L${curve('832 405 700 385 500 355 300 325 150 308 -2 296')}z`

// Stock block with the half machined handrail on it, in window coordinates
const Stock = () => (
  <svg viewBox="443 255 2739 1783" preserveAspectRatio="none" className="absolute inset-0 h-full w-full" role="img" aria-label="Stock model">
    <defs>
      <linearGradient id="wood" gradientUnits="userSpaceOnUse" x1="0" y1="0" x2="60" y2="220" spreadMethod="repeat">
        <stop offset="0" stopColor="#d5b88f" />
        <stop offset=".22" stopColor="#cda983" />
        <stop offset=".4" stopColor="#d1b089" />
        <stop offset=".6" stopColor="#c9a680" />
        <stop offset=".8" stopColor="#d0ad86" />
        <stop offset="1" stopColor="#d5b88f" />
      </linearGradient>
      <linearGradient id="cut" x1="0" x2="1" y1="0" y2="0">
        <stop offset="0" stopColor="#33291f" />
        <stop offset=".15" stopColor="#44382b" />
        <stop offset="1" stopColor="#55483a" />
      </linearGradient>
      <linearGradient id="cutEnd" x1="0" x2="1" y1="0" y2="0">
        <stop offset="0" stopColor="#55483a" />
        <stop offset=".8" stopColor="#655645" />
        <stop offset="1" stopColor="#75644f" />
      </linearGradient>
      <linearGradient id="side" x1="0" x2="1" y1="0" y2="0">
        <stop offset="0" stopColor="#33291f" />
        <stop offset="1" stopColor="#43382b" />
      </linearGradient>
      <linearGradient id="fade" x1="0" x2="1" y1="0" y2="0">
        <stop offset="0" stopColor="#000" />
        <stop offset="1" stopColor="#fff" />
      </linearGradient>
      <mask id="fadeIn" maskContentUnits="objectBoundingBox">
        <rect width="1" height="1" fill="url(#fade)" />
      </mask>
      <pattern id="mesh" width="6" height="5" patternUnits="userSpaceOnUse" patternTransform="rotate(-14)">
        <path d="M0 2h6" stroke="#2c231a" strokeWidth="2.2" opacity=".75" />
      </pattern>
      <pattern id="ribs" width="12" height="12" patternUnits="userSpaceOnUse">
        <path d="M3 0v12" stroke="#544737" strokeWidth="3" opacity=".75" />
      </pattern>
      <pattern id="grain" width="120" height="34" patternUnits="userSpaceOnUse" patternTransform="rotate(-14)">
        <path d="M0 6h26M52 12h34M12 20h22M80 27h30M40 31h12" stroke="#a98259" strokeWidth="1" opacity=".35" />
      </pattern>
    </defs>

    {/* base board */}
    <path d="M873 1245L1145 1174 1500 1000 2500 1150 2820 1232 2571 1291 1241 1613z" fill={WOOD} />
    <path d="M873 1245L1145 1174 1500 1000 2500 1150 2820 1232 2571 1291 1241 1613z" fill="url(#grain)" />
    <path d="M873 1245L1241 1613V1679L873 1309z" fill="#3a3025" />
    <path d="M1241 1613L2571 1291 2820 1232V1296L1241 1679z" fill={DARK} />

    {/* left half of the arch */}
    <g transform="translate(1100 600) scale(.7653 .5741)">
      <path d={bodyLeft} fill={WOOD} />
      <path d={bodyLeft} fill="url(#grain)" />
      <path d="M740 105L800 200 852 260" stroke="#b08a64" strokeWidth="1.500" fill="none" />
      <path d={massLeft} fill={DARK} />
      <path d="M51 905L62 1040 75 1085 133 1152V1680L65 1620 51 1450z" fill="#40362a" />
      <path d="M133 1152H198L240 1040V1706H202L133 1680z" fill="#3a2f24" />
      <path d="M133 1152H198L240 1040V1706H202L133 1680z" fill="url(#ribs)" opacity=".35" />
      <path d={`M875 560H1570V990L${curve('1570 990 1480 960 1380 942 1290 936 1200 935 1060 943 900 975')}z`} fill="url(#ribs)" opacity=".18" />

      {/* steps left by the roughing passes */}
      <path d="M418 213L426 226 424 245 405 300 360 390 300 510 240 620 200 705 187 738 190 725 230 610 290 505 350 390 395 300 420 235z" fill={DARK} />
      <path d={`M${curve('684 77 690 100 702 150 702 190 688 260 668 308')}L640 345 610 385 560 430 500 500 430 590 370 650 310 770 275 840 250 905 231 950 235 885 262 800 300 705 370 605 440 510 500 440 570 375 620 310 668 262 690 210 700 150z`} fill={DARK} />
      <path d="M440 715L395 775 350 865 330 910 303 990 305 1038 340 930 370 870 410 820 440 770z" fill={DARK} />
      <path d="M305 1038L320 975 345 915 385 850 430 785 435 840 448 890 400 990 388 1012z" fill={WOOD} />
      <path d="M392 1060L440 960 456 990 447 1012 450 1028 458 1038z" fill={WOOD} />
      <path d="M458 1145L478 1232 465 1237 449 1232z" fill="#94806a" />
      <path d="M146 1200Q170 1196 200 1203" stroke="#a98f6c" strokeWidth="2" fill="none" />

      {/* finished ramp seen edge on */}
      <path d={`M${rampOuter}L${rampInner}z`} fill={WOOD} />
      <path d="M448 890L430 800 432 740 445 690 480 620 540 555 620 500 720 445 850 405 905 392 915 408 850 425 740 475 640 530 570 600 510 680 475 760 460 830z" fill="url(#mesh)" opacity=".8" />
      <path d={`M${bandTop}L${bandBottom}z`} fill="url(#cut)" />
      <path d={`M${bandTop}L${bandBottom}z`} fill="url(#mesh)" />
      <path d={`M${curve('717 543 800 503 900 465 1000 435 1100 415 1200 408 1300 410 1420 430 1500 455 1570 478')}L${curve('1570 492 1450 460 1300 440 1200 435 1100 440 1000 450 900 475 800 512 717 543')}z`} fill={WOOD} />
      <path d="M1065 492l55-3M1155 485q130-4 252 16M1440 510l45 7" stroke="#bfa57c" strokeWidth="2.5" fill="none" />

      {/* front nose */}
      <path d="M90 690L88 750 100 800 122 830 135 870 130 880 100 850 88 815z" fill={DARK} />
      <path d="M52 870L62 930 85 990 115 1025 150 1050 178 1085 193 1140 200 1152 170 1115 120 1085 90 1050 70 1010 55 950z" fill="#3a3025" />
      <path d={nose} fill="#a88e70" />
      <path d="M187 560L165 620 140 740 140 900 150 1000 175 1085 198 1150 225 1085 258 1002 230 960 237 885 200 800 184 730 180 640z" fill="#7b6751" />
      <path d={nose} fill="url(#mesh)" />
    </g>

    {/* right half of the arch */}
    <g transform="translate(2300 700) scale(.3827 .4146)">
      <path d={`M${curve('-2 17 210 52 400 88 560 120 800 180 950 220 1100 265 1240 297')}L1308 315V345L1275 478 1310 487V600L1314 800 1317 1245 1358 1283 1300 1300H900V700H-2z`} fill={WOOD} />
      <path d={`M${curve('-2 352 100 378 200 405 300 440 400 490 540 560')}L570 580 500 520 400 470 325 405 300 378 250 365 150 335 -2 300V292L150 306 300 322 380 385 480 445 570 493 690 582 640 540 600 480 585 465V410L560 390 440 345 587 368 589 400 625 440 680 500 708 527 850 500 950 475 1050 435 1130 405 1180 392 1308 350 1308 380 1275 478 1310 487V600L1314 800 1317 1245 1358 1283V1440L708 1480L${floorRight}z`} fill={DARK} />
      <path d={`M150 480L560 560 708 595V1427L${floorRight}z`} fill="url(#side)" />
      <path d={`M150 440L708 560V1427L${floorRight}z`} fill="url(#ribs)" mask="url(#fadeIn)" />
      <path d="M-2 352L100 378 200 405 300 440 400 490 700 600V640L400 520 200 440-2 400z" fill="url(#ribs)" opacity=".4" />
      <path d="M300 322L380 385 480 445 570 493 690 582 700 595 708 527 680 500 625 440 589 400 587 368 585 465 600 480 640 540 690 582 480 500 330 400z" fill="url(#ribs)" opacity=".5" />
      <path d="M-2 425L100 445 200 480 300 523 430 572 440 580 300 532 210 498 100 462-2 440z" fill={WOOD} />
      <path d="M520 622l35 18M550 565l22 15" stroke="#bfa57c" strokeWidth="3" />

      <path d="M730 415L760 430 800 428 850 420 950 390 1050 350 1130 335 1200 305 1240 297 1308 315V345L1180 385H1150L1060 415 950 455 850 485 770 495 740 488 730 475z" fill={DARK} />
      <path d="M685 386L730 410V424z" fill={DARK} />
      <path d="M862 313L960 290 1060 268 1190 296 1180 302 1050 340 1000 355 940 365 832 388 840 330z" fill={DARK} />
      <path d="M860 280L950 256 1003 268 960 282 858 308z" fill={DARK} />
      <path d={bandRight} fill="url(#cutEnd)" />
      <path d={bandRight} fill="url(#mesh)" />
      <path d="M848 563L980 525 1100 487 1160 460 1230 440 1280 428 1230 462 1160 485 1000 527z" fill={WOOD} />
      <path d="M1055 586L1150 560 1230 532 1250 508 1300 493 1285 525 1220 545 1130 572z" fill={WOOD} />
      <path d="M1275 476L1310 487 1265 482z" fill={WOOD} />
      <path d="M1317 1245L1300 1262 1292 1296 1358 1283z" fill={WOOD} />
      <path d="M1148 636l49-11M1226 618l60-18" stroke="#bfa57c" strokeWidth="3" />
    </g>

    {/* part origin */}
    <path d="M2801 1277l18 18" stroke="#8a1f1f" strokeWidth="2" />
    <path d="M2821 1297V1262" stroke="#1c1c96" strokeWidth="5" />
    <path d="M2821 1256l6 11h-12z" fill="#3a3ac0" />
    <path d="M2818 1297L2786 1304" stroke="#1f8f2f" strokeWidth="5" />
    <path d="M2777 1306l16-8v13z" fill="#1f8f2f" />
    <circle cx="2822" cy="1297" r="6" fill="#36bcd0" />

    {/* view triad */}
    <path d="M520 1940L494 1934" stroke="#b01c2e" strokeWidth="9" />
    <path d="M472 1933l20-12v26z" fill="#b01c2e" />
    <path d="M506 1926l18 14" stroke="#129a2c" strokeWidth="10" />
    <path d="M520 1942L508 1990" stroke="#4848d8" strokeWidth="9" />
    <path d="M498 1976l16 5-11 15z" fill="#1010b0" />
    <path d="M461 1932l5-11 5 8M495 1993h8l-7 10h8" stroke="#1818c0" strokeWidth="2" fill="none" />

    {/* accept mark */}
    <path d="M3011 370L3029 354 3042 371 3086 331 3103 347 3050 407 3040 407z" fill="#d9ead3" />
  </svg>
)

const HudButton = ({ name, menu = false }: { name: string; menu?: boolean }) => (
  <>
    <button aria-label={name} className="flex h-12 w-[46px] items-center justify-center"><Icon name={name} /></button>
    {menu && <button aria-label={`${name} menu`} className="flex w-5 justify-center"><Caret /></button>}
  </>
)

const paneTabs = ['house', 'cad', 'cam', 'books', 'folder', 'palette', 'ball', 'props', 'disc', 'chat', 'simulate']

const Viewport = () => (
  <main className="relative min-w-0 flex-1 bg-[#fdfdfd]">
    <Stock />
    <div className="relative flex h-full items-start">
      <div className="flex w-[1084px] shrink-0 items-center gap-1 pt-[12px] pl-[14px] text-[22px]">
        <svg viewBox="0 0 8 14" className="mr-5 h-[14px] w-2" aria-hidden="true"><path d="M0 0v14l8-7z" fill="#1a1a1a" /></svg>
        <Icon name="part" />
        <span>Handrail...</span>
      </div>
      <div className="flex items-center pt-[2px]">
        {['zoomFit', 'zoomArea', 'prevView', 'section'].map((n) => <HudButton key={n} name={n} />)}
        <HudButton name="orient" menu />
        <HudButton name="display" menu />
        <div className="flex h-12 items-center border border-[#8a8a8a] bg-[#c0c0c0]">
          <button aria-label="Hide or show items" className="flex w-[45px] justify-center"><Icon name="eye" /></button>
          <button aria-label="Hide or show menu" className="flex h-full w-[19px] items-center justify-center bg-[#eee]"><Caret dark /></button>
        </div>
        <HudButton name="appearance" />
        <HudButton name="scene" menu />
        <HudButton name="monitor" menu />
      </div>
      <div className="mt-[77px] ml-auto flex w-[53px] flex-col border-l border-[#8a8a8a]">
        {paneTabs.map((n) => (
          <button key={n} aria-label={n} className={clsx('flex h-12 items-center justify-center border-t border-[#8a8a8a] last:border-b', n === 'cad' ? 'bg-[#f8f8f8]' : 'bg-[#d1d1d1]')}>
            <Icon name={n} />
          </button>
        ))}
      </div>
    </div>
    <div className="absolute top-[831px] -left-[2px] flex h-[78px] w-5 items-center justify-center border border-l-0 border-[#8d8d8d] bg-[#f5f5f5]">
      <span className="size-3 rounded-full border border-[#8a8a8a] bg-[#d4d4d4]" />
    </div>
  </main>
)

const materials: [string, string?][] = [
  ['0-Weldment'], ['1- PlyWood 1'], ['1- PlyWood 6'], ['1-DriftWood'], ['1-Oak 19mm'], ['1-Zebrano19'], ['2-Oak 19mm'],
  ['2-Oak 25mm'], ['2-White chest'], ['3-White Lam', 'laminate'], ['Beech 15mm'], ['Beech 18.5m'], ['Beech 18mm'],
  ['Beech 19.3m'], ['Beech 19mm'], ['Beech 25mm'], ['Black Lamina', 'laminate'], ['Compound C', 'compound'],
  ['Compound C', 'compound'], ['Corian 12mm'], ['Curved Panel'], ['Curved Panel'], ['Curved Panel'], ['Glass 6mm'],
  ['MDF 11.19m'], ['MDF 13mm'], ['MDF 15mm'], ['MDF 16mm'], ['MDF 19mm'], ['MDF 21mm'], ['MDF 30mm'], ['MDF 6mm'],
  ['Oak 50mm H'], ['Oak Laminat', 'laminate'], ['Orange 15m'], ['Orange 16m'], ['Orange 19m'], ['Orange 32m'],
  ['Pine 1" 1/2 P'], ['Walnut 19m'], ['Walnut 22m'], ['Walnut Lami', 'laminate'], ['White 19mm'], ['White 21mm'],
  ['White 32mm'], ['White 6mm'],
]

const SELECTED = 12

const Library = () => (
  <aside className="flex w-[274px] shrink-0 flex-col overflow-hidden border-l-2 border-[#7f7f7f] bg-[#f5f5f5]">
    <div className="flex h-[46px] shrink-0 items-center gap-24 border-b-2 border-[#1a1a1a] bg-[#a7aaad] pl-[17px] whitespace-nowrap">
      <svg viewBox="0 0 20 18" className="h-[18px] w-5 shrink-0" aria-hidden="true"><path d="M1 1l8 8-8 8M10 1l8 8-8 8" stroke="#2a2a2a" strokeWidth="3" fill="none" /></svg>
      <h2 className="text-[23px] font-bold">SWOOD Libr</h2>
    </div>
    <div className="ml-[5px] flex min-h-0 flex-1 flex-col overflow-hidden border-l border-[#d0d0d0] pl-[5px]">
      <div className="flex h-[43px] shrink-0 items-center">
        {['frame', 'frameBlue', 'box', 'boxBlue', 'boxHalf', 'angle'].map((n) => (
          <button key={n} aria-label={n} className="flex w-9 shrink-0 justify-center"><Icon name={n} size="size-7" /></button>
        ))}
        <button aria-label="layers" className="ml-1 flex h-9 w-[37px] shrink-0 items-center justify-center border border-[#7a7a7a] bg-[#adadad]"><Icon name="layers" size="size-7" /></button>
      </div>
      <label className="flex h-[36px] w-[400px] shrink-0 items-center gap-2 border border-[#6d6d6d] pl-1">
        <Icon name="funnel" size="size-7" />
        <input aria-label="Filter" className="min-w-0 flex-1 bg-transparent outline-none" />
      </label>
      <div className="flex min-h-0 flex-1 flex-col overflow-hidden pt-[1px] text-[20px] whitespace-nowrap">
        <div className="flex h-[34px] shrink-0 items-center gap-[10px] pl-[5px]">
          <Caret dark /><span className="w-[3px]" /><Icon name="layers" size="size-[26px]" />Materials
        </div>
        <div className="flex h-[34px] shrink-0 items-center gap-2 pl-10">
          <Caret dark /><span className="w-[6px]" /><Icon name="folder" size="size-[30px]" />Demo
        </div>
        {materials.map(([label, icon = 'material'], i) => (
          <div key={i} className={clsx('ml-[104px] flex h-[34px] w-[300px] shrink-0 items-center gap-[9px] border pl-1', i === SELECTED ? 'border-[#5f8fbf] bg-[#a9c5e4]' : 'border-transparent')}>
            <Icon name={icon} size="size-[26px]" />{label}
          </div>
        ))}
      </div>
    </div>
  </aside>
)

const Caption = () => (
  <div className="absolute bottom-[142px] left-0 flex h-[270px] w-[65%] items-center gap-[2px] bg-[#344e71]/54 pl-[66px] font-['Noto_Sans_CJK_SC',sans-serif] leading-none whitespace-nowrap text-[#f3bf2c]">
    <span className="text-[162px]">加工程序可根据</span>
    <span className="text-[164px]">设计实时</span>
    <span className="text-[158px]">更新</span>
  </div>
)

export default function App() {
  return (
    <div className="relative flex h-screen flex-col overflow-hidden bg-[#f5f5f5] font-['Noto_Sans','Noto_Sans_CJK_SC',sans-serif] text-black">
      <TitleBar />
      <Ribbon />
      <div className="flex min-h-0 flex-1">
        <div className="flex min-w-0 flex-1 flex-col">
          <CommandTabs />
          <div className="flex min-h-0 flex-1">
            <SimulationPanel />
            <Viewport />
          </div>
          <div className="flex h-[34px] shrink-0 items-stretch border-t-2 border-[#858585] text-[24px] leading-[30px]">
            <button className="w-[92px] pr-3 font-bold">Model</button>
            <button className="w-[222px] border-x border-[#8a8a8a] bg-[#d1d1d1] pr-3">Motion Study 1</button>
          </div>
        </div>
        <Library />
      </div>
      <div className="flex h-[54px] shrink-0 items-center border-b-2 border-[#7d7d7d]">
        <div className="flex h-[42px] w-[106px] items-center gap-3 border-r-2 border-[#9a9a9a] pl-[14px]">
          <Icon name="relA" /><Icon name="relB" />
        </div>
        <div className="flex h-full items-center gap-[11px] border-r-2 border-[#9a9a9a] pr-3 pl-[10px]">
          {['relC', 'relD', 'relE', 'relF', 'relG', 'relH', 'relI', 'relJ'].map((n) => <Icon key={n} name={n} />)}
        </div>
      </div>
      <footer className="flex h-[34px] shrink-0 items-center justify-between border-b-2 border-[#4a4a4a] pt-1 pr-[102px] text-[22px]">
        <span>mium 2020 SP3.0</span>
        <span>Editing Part</span>
      </footer>
      <Caption />
      <div className="absolute -right-[220px] bottom-[67px] flex h-[145px] w-[496px] items-center rounded-full border-[18px] border-[#f3bc28] bg-[#363330] pl-7 font-['DejaVu_Sans',sans-serif] text-[60px] font-bold text-white">
        SWOO
      </div>
    </div>
  )
}
